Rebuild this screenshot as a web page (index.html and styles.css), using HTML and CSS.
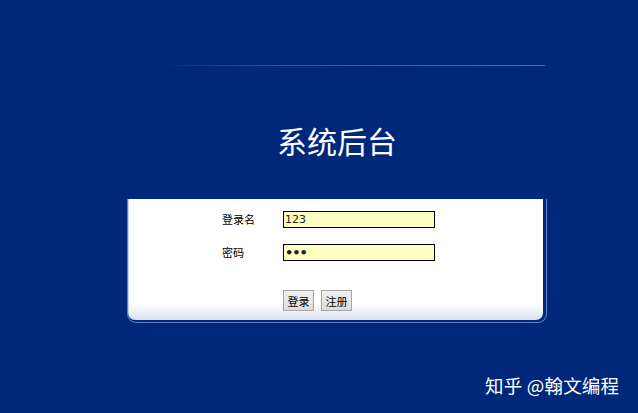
FILE: index.html
```html
<!DOCTYPE html>
<html lang="zh-CN">
<head>
<meta charset="utf-8">
<title>系统后台</title>
<link rel="stylesheet" href="styles.css">
</head>
<body>
<div class="page">
  <div class="wrap">
    <div class="topline"></div>
    <h1 class="title">系统后台</h1>
    <form class="box">
      <div class="grid">
        <label class="lbl">登录名</label>
        <input class="field" type="text" value="123">
        <label class="lbl">密码</label>
        <input class="field" type="password" value="123">
        <div class="btns">
          <button type="button" class="btn">登录</button>
          <button type="button" class="btn">注册</button>
        </div>
      </div>
    </form>
  </div>
  <div class="mark">知乎 @翰文编程</div>
</div>
</body>
</html>
```

FILE: styles.css
```css
html, body {
  margin: 0;
  padding: 0;
}
body {
  background: #00287a;
  width: 638px;
  height: 413px;
  overflow: hidden;
  font-family: "Noto Sans CJK SC", "Noto Sans", sans-serif;
}
.page {
  position: relative;
  width: 638px;
  height: 413px;
}
.wrap {
  width: 418px;
  margin-left: 127px;
  padding-top: 65px;
}
.topline {
  height: 1px;
  margin-left: 30px;
  background: linear-gradient(to right, rgba(90,125,200,0) 0%, rgba(80,115,190,0.6) 30%, #4a6db6 100%);
}
.title {
  margin: 54px 0 39px 0;
  height: 40px;
  line-height: 40px;
  font-size: 30px;
  font-weight: normal;
  color: #ffffff;
  text-align: center;
  padding-left: 2px;
}
.box {
  position: relative;
  margin: 0;
  width: 414px;
  height: 121px;
  margin-left: 1px;
  background: linear-gradient(to bottom, #ffffff 0%, #ffffff 86%, #eef1f7 93%, #d9dfec 100%);
  border-radius: 0 0 7px 7px;
  border-left: 1px solid #c9d3ea;
}
.box::after {
  content: "";
  position: absolute;
  left: -2px;
  right: -4px;
  top: 0;
  bottom: -3px;
  border: 1px solid rgba(140,165,220,0.7);
  border-top: none;
  border-radius: 0 0 9px 9px;
  pointer-events: none;
}
.grid {
  display: grid;
  grid-template-columns: 61px 152px;
  row-gap: 16px;
  padding: 12px 0 0 93px;
  align-items: center;
}
.lbl {
  font-size: 11px;
  color: #000;
  line-height: 17px;
}
.field {
  box-sizing: border-box;
  width: 152px;
  height: 17px;
  margin: 0;
  padding: 0 2px 0 1px;
  border: 1px solid #000;
  background: #ffffc4;
  font-family: "DejaVu Sans", sans-serif;
  font-size: 11px;
  color: #222;
  outline: none;
}
.field[type="password"] {
  font-size: 13px;
  font-weight: bold;
  letter-spacing: -1px;
}
.btns {
  grid-column: 2;
  display: flex;
  gap: 7px;
  margin-top: 13px;
}
.btn {
  box-sizing: border-box;
  height: 21px;
  width: 31px;
  padding: 0;
  margin: 0;
  border: 1px solid #a5a5a5;
  background: linear-gradient(to bottom, #f0f0f0, #dcdcdc);
  font-family: "Noto Sans CJK SC", sans-serif;
  font-size: 11px;
  color: #000;
}
.mark {
  position: absolute;
  left: 485px;
  top: 372px;
  font-size: 18.5px;
  line-height: 26px;
  color: #ffffff;
  letter-spacing: 0.2px;
}
```
